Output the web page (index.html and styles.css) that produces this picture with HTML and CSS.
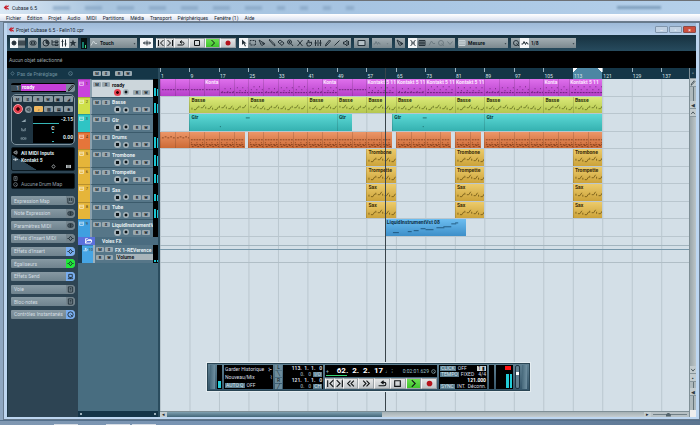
FILE: index.html
```html
<!DOCTYPE html>
<html lang="fr">
<head>
<meta charset="utf-8">
<title>Cubase 6.5</title>
<meta name="viewport" content="width=device-width, initial-scale=1">
<link rel="stylesheet" href="styles.css">
</head>
<body>
<svg class="defs" aria-hidden="true">
  <symbol id="logo" viewBox="0 0 10 10"><path d="M5 1 1 5l4 4V6.500l3 2V6L5 5l3-1V1.500l-3 2z" fill="#c8202c"/></symbol>
  <symbol id="start" viewBox="0 0 16 16"><path d="M3 2v12M13 2 7 8l6 6"/></symbol>
  <symbol id="end" viewBox="0 0 16 16"><path d="M13 2v12M3 2l6 6-6 6"/></symbol>
  <symbol id="loop" viewBox="0 0 16 16"><path d="M4 12h7c4 0 4-6 0-6H7M10 3 6 6l4 3M4 12H1"/></symbol>
  <symbol id="stop" viewBox="0 0 16 16"><path d="M3 3h10v10H3z"/></symbol>
  <symbol id="play" viewBox="0 0 16 16"><path d="m5 2 6 6-6 6"/></symbol>
  <symbol id="rec" viewBox="0 0 16 16"><circle cx="8" cy="8" r="5" fill="#b5121b" stroke="none"/></symbol>
  <symbol id="back" viewBox="0 0 16 16"><path d="M8 3 3 8l5 5M14 3 9 8l5 5"/></symbol>
  <symbol id="fwd" viewBox="0 0 16 16"><path d="m2 3 5 5-5 5M8 3l5 5-5 5"/></symbol>
  <symbol id="arrow" viewBox="0 0 16 16"><path d="M4 1v11l3-3 3 6 2-1-3-5h4z" fill="currentColor" stroke="none"/></symbol>
  <symbol id="range" viewBox="0 0 16 16"><path d="M2 3h11v9H2z" stroke-dasharray="2 1"/></symbol>
  <symbol id="rect" viewBox="0 0 16 16"><path d="M1 3h14v10H1z" fill="#b4c0c6"/></symbol>
  <symbol id="split" viewBox="0 0 16 16"><path d="m2 2 11 7M2 2l5 11M7 8l7 1-6 4"/></symbol>
  <symbol id="glue" viewBox="0 0 16 16"><path d="m2 2 9 10 3 2-1-4L4 1z"/></symbol>
  <symbol id="erase" viewBox="0 0 16 16"><path d="m2 6 4-4 8 6-4 5zM6 9l4-4"/></symbol>
  <symbol id="zoom" viewBox="0 0 16 16"><circle cx="7" cy="6" r="4"/><path d="m10 9 4 5M5 6h4M7 4v4"/></symbol>
  <symbol id="mute" viewBox="0 0 16 16"><path d="m3 2 10 12M13 2 3 14"/></symbol>
  <symbol id="hand" viewBox="0 0 16 16"><path d="M3 8h3V3h2v5l5-2v5l-3 3H5z"/></symbol>
  <symbol id="warp" viewBox="0 0 16 16"><path d="M3 2v12M8 2v12M13 2v12M1 8h5M10 8h5"/></symbol>
  <symbol id="pencil" viewBox="0 0 16 16"><path d="m3 14 1-4 7-8 2 2-7 8z"/></symbol>
  <symbol id="line" viewBox="0 0 16 16"><path d="M3 13 13 3"/></symbol>
  <symbol id="speaker" viewBox="0 0 16 16"><path d="M3 6h3l4-4v12l-4-4H3zM13 4v8"/></symbol>
  <symbol id="dot" viewBox="0 0 16 16"><circle cx="8" cy="8" r="4" fill="currentColor"/></symbol>
  <symbol id="keys" viewBox="0 0 16 16"><path d="M2 3v10M6 3v10M10 3v10M14 3v10" stroke-width="3"/></symbol>
  <symbol id="link" viewBox="0 0 16 16"><rect x="2" y="4" width="12" height="8" rx="3"/><path d="M5 5v6M8 4v8M11 5v6"/></symbol>
  <symbol id="pie" viewBox="0 0 16 16"><circle cx="8" cy="8" r="6"/><path d="M8 8V2a6 6 0 0 1 5 9z" fill="currentColor"/></symbol>
  <symbol id="tree" viewBox="0 0 16 16"><path d="M2 2v10h5M2 6h5M8 4h6v3H8zM8 10h6v3H8z"/></symbol>
  <symbol id="faders" viewBox="0 0 16 16"><path d="M5 1v14M11 1v14M3 5h4M9 10h4"/></symbol>
  <symbol id="star" viewBox="0 0 16 16"><path d="m8 1 2 5h5l-4 3 2 6-5-4-5 4 2-6-4-3h5z" fill="currentColor" stroke="none"/></symbol>
  <symbol id="auto" viewBox="0 0 16 16"><path d="M2 13 7 4l3 5h4"/></symbol>
  <symbol id="snap" viewBox="0 0 16 16"><path d="M3 2c4 4 4 8 0 12M13 2c-4 4-4 8 0 12M8 5v6"/></symbol>
  <symbol id="grid" viewBox="0 0 16 16"><path d="M2 3h12v10H2zM2 8h12M6 3v10M10 3v10"/></symbol>
  <symbol id="scroll" viewBox="0 0 16 16"><path d="M1 8h14M4 5 1 8l3 3M12 5l3 3-3 3M8 3v10"/></symbol>
  <symbol id="q" viewBox="0 0 16 16"><circle cx="8" cy="8" r="5"/><path d="m9 9 5 5"/></symbol>
  <symbol id="wave" viewBox="0 0 16 16"><path d="M1 10h3l2-5 3 6 2-5 2 4h2"/></symbol>
  <symbol id="diamond" viewBox="0 0 16 16"><path d="m8 2 5 6-5 6-5-6z"/></symbol>
  <symbol id="down" viewBox="0 0 16 16"><path d="m3 5 5 6 5-6"/></symbol>
  <symbol id="caret" viewBox="0 0 16 16"><path d="M5 9h6l-3 4z" fill="currentColor" stroke="none"/></symbol>
  <symbol id="up" viewBox="0 0 16 16"><path d="m3 11 5-6 5 6"/></symbol>
  <symbol id="piano" viewBox="0 0 16 16"><path d="M2 2v12h12V2M6 2v7M10 2v7"/></symbol>
  <symbol id="folder" viewBox="0 0 16 16"><path d="M1 14V4h5l2 2h6v3M1 14l3-6h12l-3 6z"/></symbol>
  <symbol id="eq" viewBox="0 0 16 16"><path d="M1 8h3l4-5 4 5h3M4 8l4 5 4-5"/></symbol>
  <symbol id="send" viewBox="0 0 16 16"><path d="M4 3h8v7H4zM2 13h12M8 10v3"/></symbol>
  <symbol id="knob" viewBox="0 0 16 16"><circle cx="8" cy="8" r="6"/><path d="m8 8 4 4"/></symbol>
  <symbol id="page" viewBox="0 0 16 16"><path d="M3 2h10v12H3zM6 6h4M6 9h4"/></symbol>
  <symbol id="vol" viewBox="0 0 16 16"><path d="M1 13h14V3z" fill="currentColor" stroke="none"/></symbol>
  <symbol id="pan" viewBox="0 0 16 16"><path d="M2 4v8h12V4L8 11z"/></symbol>
  <symbol id="delay" viewBox="0 0 16 16"><circle cx="8" cy="8" r="3"/><path d="M3 3v10M13 3v10M0 5v6M16 5v6"/></symbol>
</svg>

<div class="app">
  <header class="appbar">
    <svg class="logo"><use href="#logo"/></svg><span>Cubase 6.5</span>
    <div class="ghosts" aria-hidden="true"><i></i><i></i><i></i><i></i><i></i><i></i><i></i><i></i><i></i><i></i><i></i></div>
    <div class="ghost-end" aria-hidden="true"><i></i></div>
  </header>
  <nav class="menubar">
    <a href="#">Fichier</a><a href="#">Édition</a><a href="#">Projet</a><a href="#">Audio</a><a href="#">MIDI</a><a href="#">Partitions</a><a href="#">Média</a><a href="#">Transport</a><a href="#">Périphériques</a><a href="#">Fenêtre (1)</a><a href="#">Aide</a>
  </nav>

  <main class="window">
    <div class="titlebar">
      <svg class="logo"><use href="#logo"/></svg><span>Projet Cubase 6.5 - Felin10.cpr</span>
      <div class="winbtns"><button aria-label="Réduire">–</button><button aria-label="Agrandir">▫</button><button class="close" aria-label="Fermer">×</button></div>
    </div>

    <div class="toolbar">
      <div class="group w16"><button class="on"><svg><use href="#dot"/></svg></button><button><svg><use href="#keys"/></svg></button></div>
      <div class="group w10"><button><svg><use href="#link"/></svg></button></div>
      <div class="group w36"><button><svg><use href="#pie"/></svg></button><button><svg><use href="#tree"/></svg></button><button class="on"><svg><use href="#faders"/></svg></button><button><svg><use href="#star"/></svg></button></div>
      <div class="minimeter"><i></i><i></i></div>
      <label class="group w46"><svg class="pale"><use href="#auto"/></svg><select aria-label="Mode d'automation"><option>Touch</option></select><svg class="caret"><use href="#caret"/></svg></label>
      <div class="group w12"><button class="on"><svg><use href="#scroll"/></svg></button></div>
      <div class="group transport-btns w80"><button class="half"><svg><use href="#start"/></svg></button><button class="half"><svg><use href="#end"/></svg></button><button><svg><use href="#loop"/></svg></button><button><svg><use href="#stop"/></svg></button><button class="play"><svg><use href="#play"/></svg></button><button><svg><use href="#rec"/></svg></button></div>
      <div class="group w112"><button class="on"><svg><use href="#arrow"/></svg></button><button><svg><use href="#range"/></svg></button><button><svg><use href="#split"/></svg></button><button><svg><use href="#glue"/></svg></button><button><svg><use href="#erase"/></svg></button><button><svg><use href="#zoom"/></svg></button><button><svg><use href="#mute"/></svg></button><button><svg><use href="#hand"/></svg></button><button><svg><use href="#warp"/></svg></button><button><svg><use href="#pencil"/></svg></button><button><svg><use href="#line"/></svg></button><button><svg><use href="#speaker"/></svg></button></div>
      <div class="group w16"><button><svg class="wide"><use href="#rect"/></svg></button></div>
      <div class="group w20 dim"><button><svg><use href="#wave"/></svg></button><button><svg class="caret"><use href="#caret"/></svg></button></div>
      <div class="group w10"><button><svg><use href="#split"/></svg></button></div>
      <div class="group w46"><button class="on"><svg><use href="#snap"/></svg></button><button><svg><use href="#grid"/></svg></button><button class="dim"><svg><use href="#auto"/></svg></button><button class="dim"><svg><use href="#q"/></svg></button><button class="dim"><svg><use href="#down"/></svg></button></div>
      <label class="group w50"><svg class="pale"><use href="#grid"/></svg><select aria-label="Type de grille"><option>Mesure</option></select><svg class="caret"><use href="#caret"/></svg></label>
      <div class="group w65"><button class="small"><svg><use href="#q"/></svg></button><button class="on small"><svg><use href="#wave"/></svg></button><select aria-label="Quantification"><option>1/8</option></select><svg class="caret"><use href="#caret"/></svg></div>
    </div>

    <div class="infoline">Aucun objet sélectionné</div>

    <div class="project">
      <aside class="inspector">
        <div class="preset"><svg><use href="#diamond"/></svg><span>Pas de Préréglage</span><svg><use href="#knob"/></svg></div>
        <div class="trackname"><b>1</b><span>roady</span><button aria-label="Éditer"><svg><use href="#pencil"/></svg></button></div>
        <section class="basic">
          <div class="keys"><button>M</button><button>S</button><button>R</button><button>W</button><button>▣</button><button>◢</button></div>
          <div class="keys lower"><button class="recbig" aria-label="Enregistrer"></button><button class="round"><svg><use href="#speaker"/></svg></button><button class="amber">♪</button><button>▥</button><button>▤</button><button>✱</button></div>
          <div class="values">
            <svg><use href="#vol"/></svg><div><output>-2.15</output><i class="bar"></i></div>
            <svg><use href="#pan"/></svg><div class="mid"><output>C</output><i class="bar tick"></i></div>
            <svg><use href="#delay"/></svg><div><output>0.00</output><i class="bar tick"></i></div>
          </div>
        </section>
        <section class="routing">
          <div><svg><use href="#speaker"/></svg>All MIDI Inputs</div>
          <div><svg><use href="#scroll"/></svg>Kontakt 5</div>
          <div class="notch"><svg><use href="#diamond"/></svg><svg><use href="#keys"/></svg></div>
        </section>
        <section class="drummap"><div><svg><use href="#page"/></svg></div><div><svg><use href="#knob"/></svg>Aucune Drum Map</div></section>
        <div class="tabs" id="tabs"></div>
      </aside>

      <section class="tracklist">
        <div class="listhead"><span><button>M</button><button>S</button></span><span><button>R</button><button>W</button></span></div>
        <div class="tracks" id="tracks"></div>
        <div class="folder"><div class="foldertag"><svg><use href="#folder"/></svg></div><span>Voies FX</span></div>
        <div class="fx">
          <div class="strip"><svg><use href="#loop"/></svg>10</div>
          <div class="fxbody"><div class="line"><button>M</button><button>S</button><span>FX 1-REVerence</span></div><div class="line"><button>R</button><button>W</button><em>Volume</em></div></div>
          <div class="meter"><i></i><i></i></div>
        </div>
        <div class="listfoot"><i></i><i></i></div>
      </section>

      <section class="arrange">
        <div class="ruler" id="ruler"></div>
        <div class="lanes" id="lanes"></div>
        <div class="fxlane"></div>
        <div class="space"></div>
        <div class="hscroll"><button aria-label="Gauche">◂</button><i class="thumb"></i><i class="rest"></i><button aria-label="Droite">▸</button><input type="range" aria-label="Zoom horizontal" value="45"></div>
        <div class="playhead"></div>
      </section>

      <div class="vscroll">
        <button aria-label="Options de règle">▫</button><button aria-label="Crayon"><svg><use href="#pencil"/></svg></button><i class="slot"></i><button aria-label="Zoom">◀</button><button aria-label="Haut"><svg><use href="#up"/></svg></button><i class="track-slot"></i><button aria-label="Bas"><svg><use href="#down"/></svg></button><button aria-label="Réduire">▪</button><i class="slot short"></i><button aria-label="Zoom vertical">◀</button><i class="slot"></i><b></b>
      </div>

      <section class="transport" aria-label="Transport">
        <i class="grip"></i>
        <div class="tmeter"><i></i></div>
        <div class="tbox modes"><div>Garder Historique<s>⊱</s></div><div>Nouveau/Mix<s>⌇</s></div><div><b>AUTO Q</b><em>OFF</em></div></div>
        <div class="loc"><div class="icons"><button>L</button><button>╲</button><button>R</button><button>╱</button></div>
          <div class="tbox"><div>113.&nbsp; 1.&nbsp; 1.&nbsp;&nbsp; 0</div><div class="faint">0.&nbsp;&nbsp; 0 <b>I/O</b></div><div>121.&nbsp; 1.&nbsp; 1.&nbsp;&nbsp; 0</div><div class="faint">0.&nbsp;&nbsp; 0 <b>CH</b></div></div></div>
        <div class="main">
          <div class="display"><i class="pos"></i><span>+</span><strong>62.&nbsp; 2.&nbsp; 2.&nbsp; 17</strong><span>♩ ⁝</span><time>0:02:01.629</time><svg><use href="#knob"/></svg></div>
          <div class="transport-btns big"><button class="half"><svg><use href="#start"/></svg></button><button class="half"><svg><use href="#end"/></svg></button><button><svg><use href="#back"/></svg></button><button><svg><use href="#fwd"/></svg></button><button><svg><use href="#loop"/></svg></button><button><svg><use href="#stop"/></svg></button><button class="play"><svg><use href="#play"/></svg></button><button><svg><use href="#rec"/></svg></button></div>
        </div>
        <div class="tbox click"><div><b>CLICK</b><em>OFF</em><u>1 ▮</u></div><div><b>TEMPO</b><em>FIXED</em><span>4/4</span></div><div><strong>121.000</strong></div><div><b>SYNC</b><em>INT.</em><span>Déconn.</span></div></div>
        <div class="tmeter blank"></div>
        <div class="tmeter double"><i></i><i></i></div>
        <input class="outfader" type="range" aria-label="Niveau de sortie" value="70">
        <i class="grip"></i>
      </section>
    </div>
  </main>
  <footer class="taskbar" aria-hidden="true"><i></i><i></i><i></i></footer>
</div>
<script src="app.js"></script>
</body>
</html>
```
FILE: styles.css
```css
* { box-sizing: border-box; }
body {
  margin: 0;
  font: 5px/6px Roboto, "Noto Sans", sans-serif;
  color: #17242e;
  background: #8da6c0;
}
button, select, input { margin: 0; padding: 0; border: 0; font: inherit; color: inherit; background: none; min-width: 0; }
select { appearance: none; }
svg { width: 8px; height: 8px; flex: none; fill: none; stroke: currentColor; stroke-width: 2; }
i, em, s, u { font-style: normal; text-decoration: none; }
a { color: inherit; text-decoration: none; }
.defs { position: absolute; width: 0; height: 0; }
.app { display: flex; flex-direction: column; min-height: 100vh; }

/* application frame */
.appbar {
  display: flex; align-items: center; gap: 2px; height: 14px; padding: 0 3px;
  border-top: 1px solid #6d7176;
  background: linear-gradient(90deg, #dce9f5, #a9c5df 14%, #a6c4e2 50%, #b5d0ea);
}
.logo { width: 7px; height: 7px; stroke: none; }
.ghosts { display: flex; flex: 1; gap: 15px; margin-left: 14px; filter: blur(1px); }
.ghosts i { width: 17px; height: 4px; background: #7f9fbd; opacity: .6; }
.ghosts i:nth-child(n+8) { width: 8px; }
.ghost-end { width: 80px; filter: blur(1px); }
.ghost-end i { display: block; width: 44px; height: 3px; background: #7f9fbd; }
.menubar {
  display: flex; align-items: center; gap: 6px; height: 8px; padding: 0 6px;
  background: linear-gradient(#fff, #d9e0f0); border-bottom: 1px solid #6c7c8c;
}
.window {
  display: flex; flex-direction: column; flex: 1; margin: 0 0 0 3px;
  border: solid #bdd6f0; border-width: 0 4px 3px; outline: 1px solid #66798c; outline-offset: -1px;
}
.titlebar {
  display: flex; align-items: center; gap: 1px; height: 13px; padding: 2px 0 0 1px;
  background: linear-gradient(#9bb7d6, #b6cfea);
}
.winbtns { display: flex; gap: 1px; margin-left: auto; }
.winbtns button { width: 13px; height: 7px; border: 1px solid #8095ac; border-radius: 1px; background: #bfd0e2; line-height: 4px; color: #fff; }
.winbtns .close { background: #cc4f3d; border-color: #8b4a46; }

/* toolbar */
.toolbar {
  display: flex; align-items: center; gap: 3px; height: 16px; padding: 0 3px;
  background: linear-gradient(#17313f, #274b5e);
}
.group { display: flex; align-items: center; height: 10px; flex: none; background: linear-gradient(#a3aeb3, #7b898f); color: #26323a; }
.group button { flex: 1; height: 10px; display: grid; place-items: center; }
.group select { flex: 1; height: 10px; padding-left: 2px; font-weight: 700; color: #0c151b; }
.group .on { background: #f4f6f7; }
.group .small { flex: 0 0 9px; }
.group .pale { color: #c9d2d6; }
.group .wide { width: 11px; }
.group .caret { width: 5px; height: 8px; }
.group .dim, .dim { color: #6d7b82; }
.w10 { width: 10px; } .w12 { width: 13px; } .w16 { width: 15px; } .w20 { width: 20px; } .w36 { width: 37px; }
.w46 { width: 47px; } .w50 { width: 50px; } .w65 { width: 65px; } .w80 { width: 80px; } .w112 { width: 112px; }
.minimeter { display: flex; gap: 1px; width: 6px; height: 11px; padding: 1px; background: #06100f; align-items: end; }
.minimeter i { flex: 1; height: 6px; background: #167a6c; }
.minimeter i + i { height: 3px; background: #35e07a; }
.transport-btns { display: flex; background: #cfd3d5; color: #101416; }
.transport-btns button { flex: 2; display: grid; place-items: center; border: 1px solid #9aa1a5; border-left-color: #f5f5f5; background: linear-gradient(#e4e6e7, #bfc4c7); }
.transport-btns .half { flex: 1; }
.transport-btns .play { background: linear-gradient(#6ee053, #3fc52c); }
.infoline { height: 17px; padding: 6px 2px; color: #9aa5ab; background: #000; }

.project { display: flex; flex: 1; position: relative; }

/* inspector */
.inspector { width: 71px; flex: none; padding: 0 3px; background: #2d4453; border-left: 1px solid #1b3645; color: #dfe7eb; }
.preset { display: flex; align-items: center; gap: 2px; height: 11px; margin: 0 -3px; padding: 0 5px 0 2px; background: #153647; color: #6f909f; }
.preset span { flex: 1; }
.preset svg, .routing svg, .drummap svg { width: 5px; height: 5px; }
.trackname { display: flex; align-items: center; height: 9px; margin-top: 4px; padding: 1px 0; border-radius: 2px; background: #000; }
.trackname b { width: 10px; text-align: right; padding-right: 2px; color: #aab; background: #3b4c57; }
.trackname span { flex: 1; height: 7px; padding-left: 1px; background: #c43fd8; font-weight: 700; color: #fff; }
.trackname button { width: 9px; height: 8px; border-radius: 0 2px 2px 0; background: #7d8f99; color: #222; }
.basic { margin-top: 2px; padding: 1px; border: 1px solid #7d929e; border-radius: 5px; background: #1e3340; }
.keys { display: grid; grid-template-columns: repeat(6, 1fr); gap: 1px; }
.keys button { height: 6px; font-size: 4px; line-height: 5px; border-radius: 1px; background: #8b9aa2; color: #1b272e; font-weight: 700; }
.keys.lower { margin-top: 2px; align-items: center; }
.keys .recbig { width: 10px; height: 10px; border-radius: 50%; background: radial-gradient(#300 25%, #e23c4a 35%); border: 1px solid #f7a3a8; }
.keys .round { width: 7px; height: 7px; margin: 0 auto; border-radius: 50%; }
.keys .round svg { width: 5px; height: 5px; display: block; margin: auto; }
.keys .amber { background: #efb860; }
.values { display: grid; grid-template-columns: 20px 1fr; grid-auto-rows: 9px; margin-top: 2px; align-items: center; justify-items: center; }
.values svg { width: 7px; height: 5px; color: #8fa3ad; }
.values div { width: 100%; height: 9px; background: #000; text-align: right; line-height: 7px; font-weight: 700; }
.values .mid { text-align: center; }
.values output { display: block; height: 7px; }
.bar { display: block; width: 65%; height: 1px; background: #36b6b8; }
.tick { width: 2px; margin: 0 auto; }
.routing, .drummap { margin-top: 2px; padding: 1px; border: 1px solid #0b1a22; border-radius: 2px; background: #000; font-weight: 700; }
.routing div, .drummap div { display: flex; align-items: center; gap: 3px; height: 7px; }
.routing .notch { height: 7px; padding-left: 14px; margin: 0 -1px -1px 20px; justify-content: space-around; }
.routing { background: linear-gradient(32deg, #2d4453 25%, #000 26%); }
.drummap { font-weight: 400; color: #8d9ba3; }
.drummap div { height: 6px; }
.tabs { display: flex; flex-direction: column; justify-content: space-between; height: 123px; margin-top: 7px; }
.tabs button { display: flex; justify-content: space-between; align-items: center; height: 9px; padding-left: 3px; border-radius: 1px 4px 4px 1px; background: linear-gradient(#8799a3, #6f838e); color: #d3dde2; text-align: left; }
.tabs svg { width: 9px; height: 9px; padding: 1px; border-radius: 0 4px 4px 0; background: #73838c; color: #1c2a33; }
.tabs .blue svg { background: #79aef0; }
.tabs .green svg { background: #20e83a; }

/* track list */
.tracklist { display: flex; flex-direction: column; width: 82px; flex: none; background: #486d80; border-right: 2px solid #2a4c5e; color: #e8eff2; }
.listhead { display: flex; gap: 5px; height: 11px; padding: 3px 0 0 15px; background: #153647; }
.listhead span { display: flex; gap: 1px; }
.tracklist button { width: 8px; height: 5px; flex: none; font-size: 4px; line-height: 5px; font-weight: 700; border-radius: 1px; background: #9aa9b1; color: #16232b; }
.tracks { display: grid; grid-template: repeat(9, 1fr) / minmax(0, 1fr); height: 158px; }
.track { display: flex; min-height: 0; }
.strip { display: flex; width: 12px; flex: none; justify-content: space-between; padding: 1px 2px 0 1px; font-size: 4px; line-height: 6px; background: var(--c); color: #4a3b20; border-top: 1px solid #0003; }
.strip svg { width: 5px; height: 5px; color: #fff; }
.panel { flex: 1; min-width: 0; overflow: hidden; padding: 1px 0 0 1px; background: #567688; border: solid #3b5a6b; border-width: 1px 0 0 1px; border-left: 2px solid #8aa0ad; }
.selected .panel { background: #ccd6db; color: #0a0f12; }
.line { display: flex; align-items: center; gap: 1px; height: 7px; white-space: nowrap; font-weight: 700; }
.line span { padding-left: 1px; }
.panel .line + .line { justify-content: flex-end; padding-right: 3px; height: 8px; }
.tracklist .disc { width: 7px; height: 7px; border-radius: 50%; background: radial-gradient(#0d1519 30%, #a4b2b9 40%); }
.tracklist .disc + .disc { width: 6px; height: 6px; margin: 0 3px 0 1px; }
.tracklist .selected .disc:first-child { background: radial-gradient(#300 20%, #e84050 35%); }
.meter { display: flex; gap: 1px; width: 5px; flex: none; padding: 0 0 1px 1px; align-items: end; background: #000; }
.meter i { flex: 1; height: var(--h, 2px); background: #1cc5d4; }
.folder { display: flex; height: 8px; line-height: 8px; font-weight: 700; background: #4a6c80; }
.folder span { padding-left: 7px; }
.foldertag { width: 17px; padding-left: 7px; background: #5b70dc; color: #fff; }
.foldertag svg { width: 7px; height: 7px; display: block; }
.fx { display: flex; height: 18px; border-left: 4px solid #1d3c4d; --c: #46a5e4; }
.fx .strip { width: 11px; padding-right: 0; }
.fxbody { flex: 1; min-width: 0; overflow: hidden; padding: 1px 0 0 1px; background: #567688; border-left: 2px solid #9db1bc; }
.fxbody .line + .line { height: 8px; }
.fxbody em { flex: 1; height: 6px; margin-left: 2px; padding-left: 1px; background: #a9b5bb; color: #10191e; }
.listfoot { display: flex; justify-content: space-between; align-items: center; height: 6px; margin-top: auto; padding: 0 2px; background: #143447; }
.listfoot i { width: 2px; height: 2px; background: #9db1bc; }

/* arrangement; the bar grid is 287 half-bar columns */
.arrange { position: relative; flex: 1; min-width: 0; display: flex; flex-direction: column; background-color: #d3dfe7; background-image: linear-gradient(90deg, #b9c6ce 1px, transparent 1px); background-size: calc(100% * 16 / 287) 100%; }
.ruler, .lane { display: grid; grid-template-columns: repeat(287, 1fr); grid-template-rows: 100%; }
.ruler { height: 11px; overflow: hidden; background: #153647; color: #d9e5ea; }
.ruler span { grid-row: 1; min-width: 0; height: 100%; padding: 5px 0 0 1px; background: linear-gradient(#9db3bf, #9db3bf) 0 0 / 1px 4px no-repeat; }
.ruler .locators { background: linear-gradient(135deg, #fff 3px, transparent 3px), linear-gradient(225deg, #fff 3px, transparent 3px), #4d86a3; }
.lanes { display: grid; grid-template-rows: repeat(9, 1fr); height: 158px; }
.lane { min-height: 0; border-bottom: 1px solid #b9c6ce; }
.clip { position: relative; grid-row: 1; min-width: 0; overflow: hidden; background: linear-gradient(var(--a), var(--b)); border-left: 1px solid #0002; color: var(--t); font-weight: 700; padding-left: 1px; white-space: nowrap; line-height: 7px; }
.clip svg { position: absolute; inset: 0; width: 100%; height: 100%; stroke: var(--n); stroke-width: 1; opacity: .7; }
.roady { --a: #df70ec; --b: #b53fc9; --t: #fce5ff; --n: #451050; padding-left: 0; }
.basse { --a: #dbea78; --b: #b5c750; --t: #2d320d; --n: #535d16; }
.gtr { --a: #5cd9d6; --b: #35b1b0; --t: #0a3b3b; --n: #0a4b4b; }
.drums { --a: #ec9668; --b: #cc6a36; --t: #4b1c05; --n: #662a0d; }
.brass { --a: #eccb6b; --b: #cca33a; --t: #3c2d07; --n: #594309; }
.liquid { --a: #6cbdf0; --b: #3d8fc9; --t: #0d3047; --n: #0c3a5b; }
.fxlane { height: 26px; border-bottom: 1px solid #b0bec6; background: linear-gradient(#a2b4be, #a2b4be) 0 8px / 100% 1px no-repeat, linear-gradient(#7697aa, #7697aa) 0 12px / 100% 1px no-repeat; }
.space { flex: 1; }
.hscroll { display: flex; height: 6px; background: #a9b5b9; border-top: 1px solid #7f8f96; }
.hscroll button { width: 7px; line-height: 5px; background: #c3cccf; }
.thumb { flex: 45; background: linear-gradient(#80a1b1, #426679); }
.rest { flex: 55; background: linear-gradient(#a4b0b4, #c5cdd0); }
input[type="range"] { appearance: none; width: 38px; height: 5px; background: linear-gradient(#707f86, #707f86) center / 90% 1px no-repeat, #b7c1c5; }
input[type="range"]::-webkit-slider-thumb { appearance: none; width: 5px; height: 4px; background: #52636b; clip-path: polygon(50% 0, 100% 50%, 100% 100%, 0 100%, 0 50%); }
.playhead { position: absolute; top: 0; bottom: 6px; left: 42.6%; width: 1px; background: #39444b; }

.vscroll { display: flex; flex-direction: column; width: 7px; flex: none; background: #aeb9bd; color: #2c3a42; border-left: 1px solid #7f8f96; }
.vscroll button { height: 8px; line-height: 6px; background: #c2cbce; border-bottom: 1px solid #87959b; text-align: center; }
.vscroll button:first-child { height: 11px; background: #153647; color: #b9cad3; }
.vscroll svg { width: 6px; height: 6px; display: block; }
.vscroll .slot { width: 1px; height: 14px; margin: 0 auto; background: #65747b; }
.vscroll .short { height: 6px; }
.vscroll .track-slot { flex: 1; background: linear-gradient(90deg, #9aa6aa, #bdc6c9); }
.vscroll b { height: 7px; background: #eee; }

/* floating transport panel */
.transport { position: absolute; left: 200px; bottom: 26px; display: flex; gap: 2px; width: 323px; height: 28px; padding: 1px 2px; border: 1px solid #2a4554; background: linear-gradient(#5f8091, #35566a); outline: 1px solid #e5edf1; color: #d5dde1; }
.grip { width: 5px; background: linear-gradient(90deg, #47697b, #6f8fa0); }
.tmeter { display: flex; gap: 1px; width: 5px; padding: 1px; align-items: end; background: #000; }
.tmeter i { flex: 1; height: 7px; background: #22ccd8; }
.tmeter.double { width: 17px; padding: 2px 1px 1px 10px; background: linear-gradient(#f11, #f11) 9px 1px / 6px 4px no-repeat, #000; }
.tmeter.double i { height: 14px; }
.tbox { display: flex; flex-direction: column; padding: 0 1px; background: #000; white-space: nowrap; overflow: hidden; }
.tbox div { display: flex; flex: 1; align-items: center; gap: 2px; }
.tbox b { padding: 0 1px; line-height: 5px; font-weight: 400; background: #587a8c; color: #d6e3ea; }
.modes { width: 49px; }
.modes s { margin-left: auto; }
.loc { display: flex; width: 48px; gap: 1px; }
.loc .icons { display: flex; flex-direction: column; gap: 1px; width: 7px; }
.loc button { flex: 1; line-height: 5px; background: #6d8c9c; color: #0e1b22; }
.loc .tbox { flex: 1; font-weight: 700; }
.loc .tbox div { justify-content: flex-end; }
.loc .faint { color: #7a8990; }
.main { display: flex; flex-direction: column; gap: 1px; flex: 1; min-width: 0; }
.display { position: relative; display: flex; align-items: center; gap: 2px; height: 12px; padding: 0 1px; background: #000; color: #9fc3d0; }
.display strong { flex: 1; text-align: right; font-size: 8px; line-height: 10px; color: #fff; }
.display time { padding-left: 8px; }
.display svg { width: 5px; height: 5px; }
.pos { position: absolute; left: 1px; bottom: 1px; width: 21px; height: 1px; background: #35d675; }
.big { flex: 1; }
.big svg { width: 9px; height: 9px; }
.click { width: 48px; }
.click span, .click u, .click strong { margin-left: auto; }
.click u { background: #ccd4d8; color: #111; line-height: 5px; padding: 0 1px; }
.click strong { color: #fff; }
input.outfader { writing-mode: vertical-lr; direction: rtl; width: 5px; height: 24px; border: 1px solid #1e3340; border-radius: 2px; background: #5f7d8d; }
input.outfader::-webkit-slider-thumb { width: 3px; height: 3px; background: #fff; clip-path: none; }

.taskbar { display: flex; gap: 2px; height: 5px; padding: 3px 0 0 54px; border-top: 1px solid #54708c; background: linear-gradient(90deg, #8098b2, #7190b4 50%, #5c7590); }
.taskbar i { width: 24px; background: #d7dde5; }
.taskbar i:first-child { margin-right: 26px; }
```
FILE: app.js
```javascript
const UNIT = 1.84;
const icon = id => `<svg><use href="#${id}"/></svg>`;

// [label, icon, tint]
const tabs = [
  ["Expression Map", "piano", ""], ["Note Expression", "link", ""],
  ["Paramètres MIDI", "link", ""], ["Effets d'Insert MIDI", "eq", ""],
  ["Effets d'Insert", "eq", "blue"], ["Égaliseurs", "eq", "green"],
  ["Effets Send", "send", "blue"], ["Voie", "page", ""],
  ["Bloc-notes", "page", ""], ["Contrôles Instantanés", "knob", "blue"]
];
document.getElementById("tabs").innerHTML =
  tabs.map(([t, i, c]) => `<button class="${c}">${t}${icon(i)}</button>`).join("");

const every = (from, to, step) => {
  const out = [];
  for (let b = from; b < to; b += step) out.push([b, Math.min(b + step, to), ""]);
  return out;
};
const brass = name => [[57, 65, name], [81, 89, name], [113, 121, name]];

// clips: [first bar, end bar, label]
const tracks = [
  { name: "roady", kind: "roady", color: "#c944dc", h: 8, clips: [
    ...every(1, 13, 4), [13, 17, "Konta"], ...every(17, 45, 4), [45, 49, "Konta"], ...every(49, 57, 4),
    [57, 65, "Kontakt 5 11"], [65, 73, "Kontakt 5 11"], [73, 81, "Kontakt 5 11"], [81, 89, "Kontakt 5 11"],
    ...every(89, 105, 4), [105, 109, "Konta"], [109, 112, ""], [112, 121, "Kontakt 5 11"]] },
  { name: "Basse", kind: "basse", color: "#cfe04a", h: 10, clips:
    [9, 25, 41, 49, 57, 65, 81, 89, 105, 113].map((b, i, a) => [b, a[i + 1] || 121, "Basse"]) },
  { name: "Gtr", kind: "gtr", color: "#2fc4c4", h: 0, clips: [[9, 49, "Gtr"], [49, 53, "Gtr"], [64, 89, "Gtr"], [89, 121, "Gtr"]] },
  { name: "Drums", kind: "drums", color: "#e5753a", h: 11, clips: [
    ...every(1, 24, 4), ...every(25, 64, 4), ...every(65, 80, 4), ...every(81, 88, 4), ...every(89, 121, 4)] },
  { name: "Trombone", kind: "brass", color: "#e5b53a", h: 11, clips: brass("Trombone") },
  { name: "Trompette", kind: "brass", color: "#e5b53a", h: 9, clips: brass("Trompette") },
  { name: "Sax", kind: "brass", color: "#e5b53a", h: 7, clips: brass("Sax") },
  { name: "Tube", kind: "brass", color: "#e5b53a", h: 9, clips: brass("Sax") },
  { name: "LiquidInstrumentV", kind: "liquid", color: "#3f9fe0", h: 0, clips: [[62, 84, "LiquidInstrumentVst 08"]] }
];

document.getElementById("tracks").innerHTML = tracks.map((t, i) => `
  <div class="track${i ? "" : " selected"}">
    <div class="strip" style="--c:${t.color}">${icon("piano")}${i + 1}</div>
    <div class="panel">
      <div class="line"><button>M</button><button>S</button><span>${t.name}</span></div>
      <div class="line"><button class="disc" aria-label="Enregistrer"></button><button class="disc" aria-label="Monitor"></button><button>R</button><button>W</button></div>
    </div>
    <div class="meter"><i style="--h:${t.h}px"></i><i style="--h:${Math.max(0, t.h - 1)}px"></i></div>
  </div>`).join("");

// Miniature note drawing for each kind of part
function notes(kind, width, bar) {
  let d = "";
  if (kind === "liquid") {
    d = "M7 14h6M22 13h4M28 12h5M35 10h5M40 11h8M51 9h8M58 8h8M66 5h5M70 4h3";
  } else if (kind === "gtr") {
    d = width > 50 && bar < 89 ? `M${bar < 50 ? 56 : 30} 4h4M30 13h1` : "";
  } else if (kind === "roady") {
    const calm = bar < 17 || (bar >= 49 && bar < 57);
    for (let x = 1; x < width - 1; x += 3) {
      d += `M${x} ${calm ? 11 : 14}h2`;
      if (!calm) d += `M${x + 1} ${13 - (x * 7 + bar) % 6}h1`;
    }
  } else if (kind === "drums") {
    for (let x = 1; x < width - 1; x += 3) {
      d += bar < 9 ? `M${x} ${5 + x % 2}h2` : `M${x} 8h2M${x} 13h2M${x + 1} ${14 + x % 2}h2`;
      if (bar >= 9 && x % 2) d += `M${x} 11h1`;
    }
  } else {
    for (let x = 2; x < width - 4; x += 7) {
      const y = 9 + (x + bar) % 3;
      d += `M${x} ${y}v2M${x + 2} ${y + 2}h2l2-3`;
    }
  }
  return `<svg viewBox="0 0 ${width} 17" preserveAspectRatio="none"><path d="${d}"/></svg>`;
}

document.getElementById("lanes").innerHTML = tracks.map(t => `<div class="lane">${
  t.clips.map(([a, b, label]) => {
    const start = (a - 1) * 2 + 1, span = (b - a) * 2;
    return `<div class="clip ${t.kind}" style="grid-column:${start}/span ${span}">${label}${notes(t.kind, Math.round(span * UNIT), a)}</div>`;
  }).join("")}</div>`).join("");

let ruler = "";
for (let bar = 1; bar < 144; bar += 8) {
  const start = (bar - 1) * 2 + 1;
  ruler += `<span class="${bar === 113 ? "locators" : ""}" style="grid-column:${start}/span ${Math.min(16, 288 - start)}">${bar}</span>`;
}
document.getElementById("ruler").innerHTML = ruler;
```
